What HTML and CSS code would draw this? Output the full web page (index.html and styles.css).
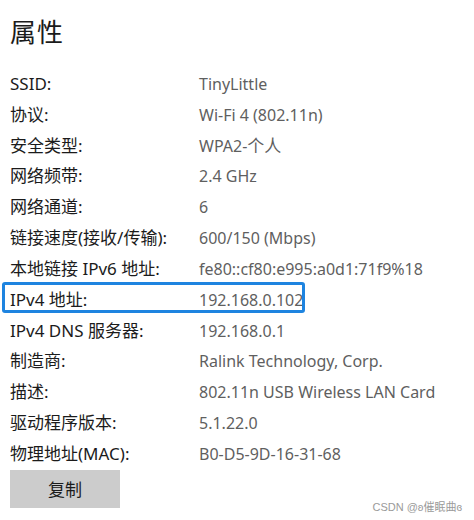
FILE: index.html
```html
<!DOCTYPE html>
<html lang="zh-CN">
<head>
<meta charset="utf-8">
<title>属性</title>
<link rel="stylesheet" href="styles.css">
</head>
<body>
<div class="page">
  <h1 class="title">属性</h1>
  <div class="props">
    <div class="row"><span class="label">SSID:</span><span class="value">TinyLittle</span></div>
    <div class="row"><span class="label">协议:</span><span class="value">Wi-Fi 4 (802.11n)</span></div>
    <div class="row"><span class="label">安全类型:</span><span class="value">WPA2-<span class="cjk">个人</span></span></div>
    <div class="row"><span class="label">网络频带:</span><span class="value">2.4 GHz</span></div>
    <div class="row"><span class="label">网络通道:</span><span class="value">6</span></div>
    <div class="row"><span class="label">链接速度(接收/传输):</span><span class="value">600/150 (Mbps)</span></div>
    <div class="row"><span class="label">本地链接 IPv6 地址:</span><span class="value">fe80::cf80:e995:a0d1:71f9%18</span></div>
    <div class="row highlighted"><span class="label">IPv4 地址:</span><span class="value">192.168.0.102</span></div>
    <div class="row"><span class="label">IPv4 DNS 服务器:</span><span class="value">192.168.0.1</span></div>
    <div class="row"><span class="label">制造商:</span><span class="value">Ralink Technology, Corp.</span></div>
    <div class="row"><span class="label">描述:</span><span class="value">802.11n USB Wireless LAN Card</span></div>
    <div class="row"><span class="label">驱动程序版本:</span><span class="value">5.1.22.0</span></div>
    <div class="row"><span class="label">物理地址(MAC):</span><span class="value">B0-D5-9D-16-31-68</span></div>
  </div>
  <button class="copy-btn">复制</button>
  <div class="watermark">CSDN @ʚ催眠曲ɞ</div>
</div>
</body>
</html>
```
FILE: styles.css
```css
html, body {
  margin: 0;
  padding: 0;
  background: #ffffff;
}
body {
  font-family: "Noto Sans", "Noto Sans CJK SC", sans-serif;
  color: #1b1b1b;
}
.page {
  position: relative;
  width: 474px;
  height: 520px;
  padding: 0 0 0 10px;
  box-sizing: border-box;
  overflow: hidden;
}
.title {
  margin: 0;
  padding-top: 13px;
  font-size: 26px;
  font-weight: 400;
  line-height: 38px;
  height: 56px;
  letter-spacing: 1px;
}
.props {
  display: flex;
  flex-direction: column;
}
.row {
  position: relative;
  display: grid;
  grid-template-columns: 189px 1fr;
  height: 30.83px;
  line-height: 30.83px;
  font-size: 16px;
  white-space: nowrap;
}
.label {
  color: #1b1b1b;
  font-size: 17px;
}
.value {
  color: #5f5f5f;
}
.cjk {
  font-size: 17px;
}
.highlighted::before {
  content: "";
  position: absolute;
  left: -8px;
  top: -3px;
  width: 297px;
  height: 25px;
  border: 3px solid #1e84e0;
  border-radius: 3px;
}
.copy-btn {
  display: block;
  margin-top: 0;
  width: 110px;
  height: 38px;
  background: #cccccc;
  border: none;
  border-radius: 0;
  font-family: "Noto Sans CJK SC", sans-serif;
  font-size: 17px;
  color: #1b1b1b;
  padding: 0;
}
.watermark {
  position: absolute;
  right: 12px;
  bottom: 6px;
  font-family: "Liberation Sans", "Noto Sans CJK SC", sans-serif;
  font-size: 11px;
  color: #9a9a9a;
}
```
